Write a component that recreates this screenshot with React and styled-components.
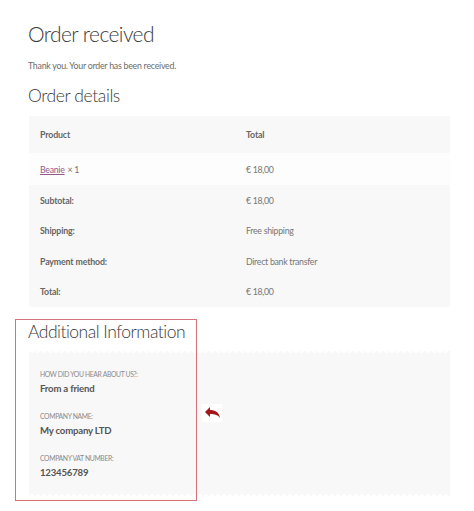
import React from "react";
import styled, { createGlobalStyle } from "styled-components";

const Global = createGlobalStyle`
  html, body { margin: 0; padding: 0; background: #fff; }
  body { font-family: Lato, "Open Sans", sans-serif; color: #6d6d6d; }
`;

const Page = styled.div`
  position: relative;
  width: 474px;
  height: 511px;
  padding: 20px 24px 0 28px;
  box-sizing: border-box;
  overflow: hidden;
`;

const Title = styled.h1`
  margin: ${(p) => p.$mt || 0}px 0 0;
  font-weight: 300;
  font-size: ${(p) => p.$size}px;
  line-height: ${(p) => p.$lh}px;
  color: #3a3a3a;
  letter-spacing: ${(p) => p.$ls}px;
`;

const Lead = styled.p`
  margin: 11px 0 0;
  font-size: 8.8px;
  line-height: 14px;
  letter-spacing: -0.25px;
  color: #6d6d6d;
`;

const Table = styled.div`
  margin: 8px 0 0 1px;
  width: 421px;
  display: grid;
  grid-template-columns: 206px 1fr;
  grid-template-rows: 37px 32px repeat(4, 30.5px);
  background: #f8f8f8;
  font-size: 8.8px;
`;

const Cell = styled.div`
  display: flex;
  align-items: center;
  padding-left: 11px;
  background: ${(p) => (p.$light ? "#fdfdfd" : "#f8f8f8")};
  font-weight: ${(p) => (p.$bold ? 700 : 400)};
  color: ${(p) => (p.$bold ? "#666" : "#777")};
  letter-spacing: ${(p) => (p.$bold ? -0.15 : -0.3)}px;
`;

const Link = styled.a`
  color: #96588a;
  text-decoration: underline;
  margin-right: 3px;
`;

const Zig = styled.div`
  position: relative;
  margin: 8px 0 0 1px;
  width: 421px;
  background: #f8f8f8;
  padding: 17px 11px 15px;
  box-sizing: border-box;
  &::before, &::after {
    content: "";
    position: absolute;
    left: 0;
    right: 0;
    height: 3px;
    background-size: 6px 3px;
    background-repeat: repeat-x;
  }
  &::before {
    top: -3px;
    background-image: linear-gradient(45deg, #f8f8f8 33%, transparent 33%), linear-gradient(-45deg, #f8f8f8 33%, transparent 33%);
  }
  &::after {
    bottom: -3px;
    background-image: linear-gradient(135deg, #f8f8f8 33%, transparent 33%), linear-gradient(-135deg, #f8f8f8 33%, transparent 33%);
  }
`;

const Field = styled.div`
  display: flex;
  flex-direction: column;
  gap: 3px;
  margin-bottom: 17px;
  &:last-child { margin-bottom: 0; }
`;

const Label = styled.span`
  font-size: 6.8px;
  line-height: 9px;
  text-transform: uppercase;
  color: #8a8a8a;
  letter-spacing: -0.35px;
`;

const Value = styled.span`
  font-size: 9.6px;
  line-height: 13px;
  font-weight: 700;
  color: #555;
  letter-spacing: -0.2px;
`;

const Frame = styled.div`
  position: absolute;
  left: 15px;
  top: 319px;
  width: 180px;
  height: 180px;
  border: 1px solid #d4737a;
  pointer-events: none;
`;

const Arrow = styled.svg`
  position: absolute;
  left: 202px;
  top: 404px;
  background: #fff;
`;

const rows = [
  ["Subtotal:", "€ 18,00"],
  ["Shipping:", "Free shipping"],
  ["Payment method:", "Direct bank transfer"],
  ["Total:", "€ 18,00"],
];

const fields = [
  ["How did you hear about us?:", "From a friend"],
  ["Company name:", "My company LTD"],
  ["Company VAT number:", "123456789"],
];

export default function App() {
  return (
    <Page>
      <Global />
      <Title $size={21} $lh={28} $ls={-0.6}>Order received</Title>
      <Lead>Thank you. Your order has been received.</Lead>
      <Title $size={17.5} $lh={24} $ls={-0.4} $mt={11}>Order details</Title>
      <Table>
        <Cell $bold>Product</Cell>
        <Cell $bold>Total</Cell>
        <Cell $light>
          <Link>Beanie</Link>× 1
        </Cell>
        <Cell $light>€ 18,00</Cell>
        {rows.map(([a, b]) => (
          <React.Fragment key={a}>
            <Cell $bold>{a}</Cell>
            <Cell>{b}</Cell>
          </React.Fragment>
        ))}
      </Table>
      <section>
        <Title $size={17.5} $lh={26} $ls={-0.5} $mt={12}>Additional Information</Title>
        <Zig>
          {fields.map(([l, v]) => (
            <Field key={l}>
              <Label>{l}</Label>
              <Value>{v}</Value>
            </Field>
          ))}
        </Zig>
      </section>
      <Frame />
      <Arrow width="20" height="18" viewBox="0 0 20 18">
        <path d="M3 8 L8 3 L8 6 C13 6 17 8 18 14 C16 11 13 10 8 10 L8 13 Z" fill="#a3161b" />
      </Arrow>
    </Page>
  );
}
